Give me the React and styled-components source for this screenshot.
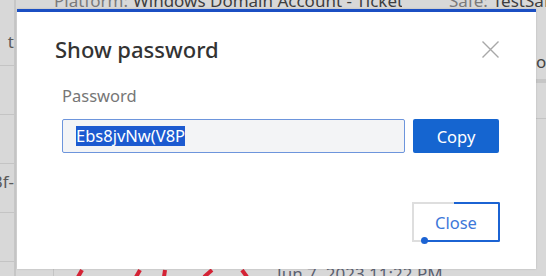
import React from 'react';
import styled, { createGlobalStyle } from 'styled-components';

const GlobalStyle = createGlobalStyle`
  html, body {
    margin: 0;
    padding: 0;
    background: #d8d8d8;
    font-family: "Noto Sans", "Open Sans", sans-serif;
  }
`;

const Page = styled.div`
  position: relative;
  width: 546px;
  height: 276px;
  overflow: hidden;
  background: #d8d8d8;
  display: flex;
`;

const SideCol = styled.div`
  width: 14px;
  flex: none;
  border-right: 2px solid #c6c6c6;
  display: flex;
  flex-direction: column;
  padding-top: 17px;
`;

const SideCell = styled.div`
  height: 49px;
  flex: none;
  border-bottom: 1px solid #c4c4c4;
  font-size: 17px;
  color: #5a5a5a;
  display: flex;
  align-items: ${p => (p.$top ? 'flex-start' : 'center')};
  padding-top: ${p => (p.$top ? '6px' : '0')};
  box-sizing: border-box;
  justify-content: flex-end;
  overflow: hidden;
  white-space: nowrap;
`;

const Main = styled.div`
  flex: 1;
  display: flex;
  flex-direction: column;
  min-width: 0;
`;

const HeaderLine = styled.div`
  display: flex;
  margin-top: -11px;
  padding-left: 38px;
  font-size: 17px;
  white-space: nowrap;
  color: #3e3e3e;
`;

const Key = styled.span`
  color: #7a7a7a;
  margin-right: 5px;
`;

const Field = styled.span`
  width: ${p => p.$w}px;
  margin-right: ${p => p.$gap}px;
  flex: none;
  overflow: hidden;
`;

const RightBits = styled.div`
  margin-left: auto;
  width: 10px;
  margin-top: 39px;
  font-size: 17px;
  line-height: 22px;
  color: #444;
  overflow: hidden;
  white-space: nowrap;
`;

const GrayBand = styled.div`
  margin-left: auto;
  width: 10px;
  height: 4px;
  margin-top: 6px;
  background: #c6c6c6;
`;

const ThinLine = styled.div`
  margin-left: auto;
  width: 10px;
  height: 1px;
  margin-top: 35px;
  background: #c4c4c4;
`;

const BottomRow = styled.div`
  margin-top: auto;
  display: flex;
  align-items: flex-end;
  height: 7px;
  padding-left: 37px;
`;

const VLine = styled.div`
  width: 1px;
  height: 7px;
  background: #c4c4c4;
`;

const Scribble = styled.svg`
  flex: none;
  display: block;
`;

const DateText = styled.span`
  margin-left: 13px;
  font-size: 17px;
  color: #5b6070;
  white-space: nowrap;
  line-height: 10px;
  height: 7px;
`;

const Dialog = styled.div`
  position: absolute;
  left: 17px;
  top: 9px;
  width: 519px;
  height: 260px;
  box-sizing: border-box;
  background: #fff;
  border-top: 3px solid #1b4fc3;
  box-shadow: 0 0 2px rgba(0, 0, 0, 0.15);
  display: flex;
  flex-direction: column;
`;

const Header = styled.div`
  display: flex;
  align-items: center;
  justify-content: space-between;
  padding: 22px 37px 0 38px;
`;

const Title = styled.h2`
  margin: 0;
  font-size: 22px;
  font-weight: 500;
  color: #333;
  line-height: 30px;
`;

const CloseX = styled.button`
  border: none;
  background: none;
  padding: 0;
  width: 17px;
  height: 17px;
  display: flex;
  cursor: pointer;
`;

const Body = styled.div`
  padding: 21px 37px 0 45px;
`;

const Label = styled.div`
  font-size: 16.5px;
  color: #767676;
  line-height: 22px;
`;

const Row = styled.div`
  display: flex;
  gap: 8px;
  margin-top: 12px;
`;

const InputBox = styled.div`
  flex: 1;
  height: 34px;
  box-sizing: border-box;
  border: 1px solid #6d95dc;
  border-radius: 2px;
  background: #f3f4f6;
  display: flex;
  align-items: center;
  padding-left: 13px;
  font-size: 16.5px;
`;

const Selected = styled.span`
  background: #1c5ad0;
  color: #fff;
  line-height: 20px;
`;

const Button = styled.button`
  font-family: inherit;
  font-size: 16.5px;
  height: 34px;
  box-sizing: border-box;
  border-radius: 2px;
  cursor: pointer;
`;

const PrimaryButton = styled(Button)`
  width: 86px;
  flex: none;
  border: none;
  background: #1565d0;
  color: #fff;
`;

const Footer = styled.div`
  margin-top: auto;
  display: flex;
  justify-content: flex-end;
  padding: 0 36px 27px 0;
`;

const SecondaryButton = styled(Button)`
  position: relative;
  width: 88px;
  height: 40px;
  background: #fff;
  border: 2px solid #dedede;
  border-radius: 0;
  color: #3d78d9;
  padding: 0;

  &::before {
    content: '';
    position: absolute;
    top: -2px;
    right: -2px;
    width: 44px;
    bottom: -2px;
    border-top: 2px solid #1b63d3;
    border-right: 2px solid #1b63d3;
    border-bottom: 2px solid #1b63d3;
    border-radius: 0 2px 2px 0;
  }

  &::after {
    content: '';
    position: absolute;
    left: 9px;
    bottom: -2px;
    width: 40px;
    border-bottom: 2px solid #1b63d3;
  }
`;

const Dot = styled.span`
  position: absolute;
  left: 7px;
  bottom: -4px;
  width: 7px;
  height: 7px;
  border-radius: 50%;
  background: #1b63d3;
`;

export default function App() {
  return (
    <>
      <GlobalStyle />
      <Page>
        <SideCol>
          <SideCell>t</SideCell>
          <SideCell />
          <SideCell />
          <SideCell $top>3f-</SideCell>
          <SideCell />
        </SideCol>
        <Main>
          <HeaderLine>
            <Key>Platform:</Key>
            <Field $w={269} $gap={47}>Windows Domain Account - Ticket</Field>
            <Key>Safe:</Key>
            <span>TestSafe</span>
          </HeaderLine>
          <RightBits>on</RightBits>
          <GrayBand />
          <ThinLine />
          <BottomRow>
            <VLine />
            <Scribble width="210" height="7" viewBox="0 0 210 7">
              <path d="M24 8 L28 1" stroke="#d42335" strokeWidth="4" fill="none" />
              <path d="M82 8 L86 1" stroke="#d42335" strokeWidth="4" fill="none" />
              <path d="M110 8 L111 1" stroke="#d42335" strokeWidth="4" fill="none" />
              <path d="M150 8 L158 1" stroke="#d42335" strokeWidth="4" fill="none" />
              <path d="M188 1 L193 8" stroke="#d42335" strokeWidth="4" fill="none" />
            </Scribble>
            <DateText>Jun 7, 2023 11:22 PM</DateText>
          </BottomRow>
        </Main>

        <Dialog role="dialog">
          <Header>
            <Title>Show password</Title>
            <CloseX aria-label="Close">
              <svg width="17" height="17" viewBox="0 0 17 17">
                <path d="M0.5 0.5 L16.5 16.5 M16.5 0.5 L0.5 16.5" stroke="#a8a8a8" strokeWidth="1.4" fill="none" />
              </svg>
            </CloseX>
          </Header>
          <Body>
            <Label>Password</Label>
            <Row>
              <InputBox>
                <Selected>Ebs8jvNw(V8P</Selected>
              </InputBox>
              <PrimaryButton>Copy</PrimaryButton>
            </Row>
          </Body>
          <Footer>
            <SecondaryButton>
              Close
              <Dot />
            </SecondaryButton>
          </Footer>
        </Dialog>
      </Page>
    </>
  );
}
